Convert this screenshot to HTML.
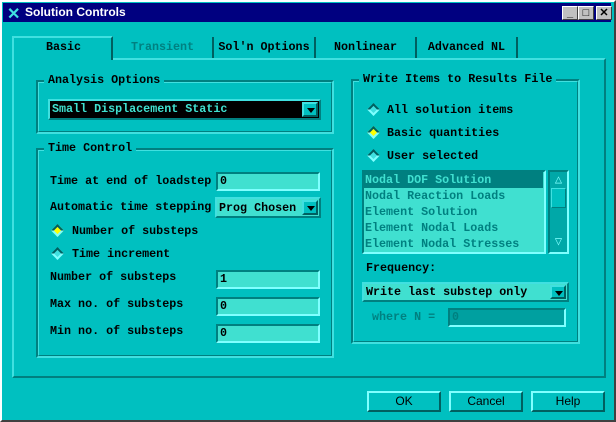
<!DOCTYPE html><html><head><style>
*{margin:0;padding:0;box-sizing:border-box}
body{width:616px;height:422px;background:#c0c0c0;position:relative;overflow:hidden;font-family:"Liberation Mono",monospace;font-weight:bold;font-size:11.7px;color:#000}
.a{position:absolute;white-space:nowrap}
#win{position:absolute;left:0;top:0;width:616px;height:422px;border:2px solid;border-color:#fff #404040 #404040 #fff;background:#00c0c0}
#title{position:absolute;left:3px;top:3px;width:608px;height:19px;background:#000080;color:#fff;font-family:"Liberation Sans",sans-serif;font-size:12px}
.wb{position:absolute;top:3px;width:16px;height:14px;background:#c0c0c0;border:1px solid;border-color:#fff #404040 #404040 #fff;color:#000;font-size:11px;text-align:center;line-height:12px}
.up{border:1px solid;border-color:#40e0e0 #008080 #008080 #40e0e0}
.grp{position:absolute;border:2px solid;border-color:#008080 #40e0e0 #40e0e0 #008080}
.grp:after{content:"";position:absolute;left:0;top:0;right:0;bottom:0;border:1px solid;border-color:#40e0e0 #008080 #008080 #40e0e0;z-index:0}
.lg{position:absolute;background:#00c0c0;padding:0 4px;top:-10px;z-index:2;line-height:16px}
.fld{position:absolute;height:19px;background:#40e0d0;border:2px solid;border-color:#008080 #80ffff #80ffff #008080;padding-left:2px;line-height:15px}
.dd{position:absolute;border:2px solid;border-color:#40e0e0 #008080 #008080 #40e0e0}
.arr{position:absolute;right:1px;top:1px;width:16px;height:15px;background:#00c0c0;border:2px solid;border-color:#40e0e0 #006060 #006060 #40e0e0}
.arr:after{content:"";position:absolute;left:3px;top:4px;border-left:4px solid transparent;border-right:4px solid transparent;border-top:5px solid #000}
.rd{position:absolute;width:9px;height:9px;transform:rotate(45deg);background:#40e0e0;border:2px solid;border-color:#006060 #80ffff #80ffff #006060}
.rd.on{background:#ffff00}
.btn{position:absolute;top:391px;width:74px;height:21px;border:2px solid;border-color:#80ffff #006060 #006060 #80ffff;text-align:center;font-family:"Liberation Sans",sans-serif;font-weight:normal;font-size:12px;line-height:17px}
.tab{position:absolute;top:37px;height:22px;text-align:center;line-height:20px;border-right:2px solid #006060}
</style></head><body>
<div id="win"></div>
<div id="title"><span class="a" style="left:4px;top:1px;color:#40e0e0;font-size:16px;font-weight:bold">✕</span><span class="a" style="left:22px;top:2px;font-weight:bold">Solution Controls</span>
<div class="wb" style="left:559px">_</div><div class="wb" style="left:575px">□</div><div class="wb" style="left:593px">✕</div></div>
<div class="a" style="left:12px;top:36px;width:101px;height:24px;border-top:2px solid #40e0e0;border-left:2px solid #40e0e0;border-right:2px solid #006060;background:#00c0c0;z-index:2"></div>
<div class="a" style="left:46px;top:40px;z-index:3">Basic</div>
<div class="tab" style="left:113px;width:101px;color:#008080">Transient</div>
<div class="tab" style="left:214px;width:102px">Sol'n Options</div>
<div class="tab" style="left:316px;width:101px">Nonlinear</div>
<div class="tab" style="left:417px;width:101px">Advanced NL</div>
<div class="a" style="left:12px;top:58px;width:594px;height:320px;border:2px solid;border-color:#40e0e0 #008080 #008080 #40e0e0"></div>
<div class="grp" style="left:36px;top:80px;width:298px;height:54px"><span class="lg" style="left:6px">Analysis Options</span></div>
<div class="dd" style="left:48px;top:99px;width:273px;height:21px;background:#000"><span class="a" style="left:2px;top:1px;color:#40e0d0">Small Displacement Static</span><div class="arr"></div></div>
<div class="grp" style="left:36px;top:148px;width:298px;height:210px"><span class="lg" style="left:6px">Time Control</span></div>
<div class="a" style="left:50px;top:174px">Time at end of loadstep</div><div class="fld" style="left:216px;top:172px;width:104px">0</div>
<div class="a" style="left:50px;top:200px">Automatic time stepping</div>
<div class="dd" style="left:215px;top:197px;width:106px;height:21px;background:#40e0d0"><span class="a" style="left:2px;top:2px">Prog Chosen</span><div class="arr"></div></div>
<div class="rd on" style="left:53px;top:226px"></div><div class="a" style="left:72px;top:224px">Number of substeps</div>
<div class="rd" style="left:53px;top:249px"></div><div class="a" style="left:72px;top:247px">Time increment</div>
<div class="a" style="left:50px;top:270px">Number of substeps</div><div class="fld" style="left:216px;top:270px;width:104px">1</div>
<div class="a" style="left:50px;top:297px">Max no. of substeps</div><div class="fld" style="left:216px;top:297px;width:104px">0</div>
<div class="a" style="left:50px;top:324px">Min no. of substeps</div><div class="fld" style="left:216px;top:324px;width:104px">0</div>
<div class="grp" style="left:351px;top:79px;width:229px;height:265px"><span class="lg" style="left:6px">Write Items to Results File</span></div>
<div class="rd" style="left:369px;top:105px"></div><div class="a" style="left:387px;top:103px">All solution items</div>
<div class="rd on" style="left:369px;top:128px"></div><div class="a" style="left:387px;top:126px">Basic quantities</div>
<div class="rd" style="left:369px;top:151px"></div><div class="a" style="left:387px;top:149px">User selected</div>
<div class="a" style="left:362px;top:170px;width:184px;height:84px;background:#40e0d0;border:2px solid;border-color:#008080 #80ffff #80ffff #008080;color:#008080;line-height:16px">
<div style="background:#008080;color:#40e0d0;margin:0 1px 0 0;padding-left:1px">Nodal DOF Solution</div>
<div style="padding-left:1px">Nodal Reaction Loads</div><div style="padding-left:1px">Element Solution</div><div style="padding-left:1px">Element Nodal Loads</div><div style="padding-left:1px">Element Nodal Stresses</div></div>
<div class="a" style="left:548px;top:170px;width:21px;height:84px;background:#00a8a8;border:2px solid;border-color:#008080 #80ffff #80ffff #008080">
<div class="a" style="left:1px;top:1px;width:15px;height:15px;color:#80ffff;font-size:12px;line-height:14px;text-align:center">△</div>
<div class="a up" style="left:1px;top:16px;width:15px;height:20px;background:#00c0c0"></div>
<div class="a" style="left:1px;top:63px;width:15px;height:15px;color:#80ffff;font-size:12px;line-height:14px;text-align:center">▽</div></div>
<div class="a" style="left:366px;top:261px">Frequency:</div>
<div class="dd" style="left:362px;top:282px;width:207px;height:20px;background:#40e0d0"><span class="a" style="left:2px;top:1px">Write last substep only</span><div class="arr" style="height:14px"></div></div>
<div class="a" style="left:372px;top:310px;color:#008080">where N =</div>
<div class="fld" style="left:448px;top:308px;width:118px;background:#00a0a0;color:#008080">0</div>
<div class="btn" style="left:367px">OK</div>
<div class="btn" style="left:449px">Cancel</div>
<div class="btn" style="left:531px">Help</div>
</body></html>
